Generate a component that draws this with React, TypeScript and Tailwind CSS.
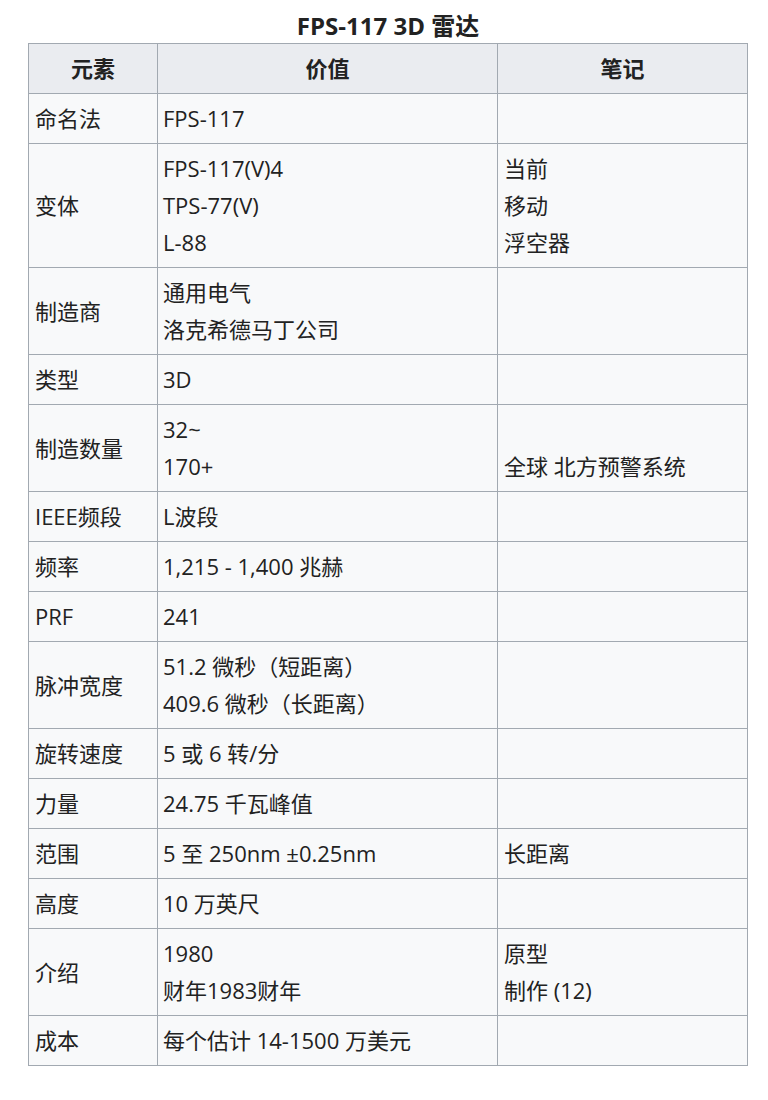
type Row = {
  label: string;
  values: string[];
  notes: string[];
};

const rows: Row[] = [
  { label: "命名法", values: ["FPS-117"], notes: [] },
  { label: "变体", values: ["FPS-117(V)4", "TPS-77(V)", "L-88"], notes: ["当前", "移动", "浮空器"] },
  { label: "制造商", values: ["通用电气", "洛克希德马丁公司"], notes: [] },
  { label: "类型", values: ["3D"], notes: [] },
  { label: "制造数量", values: ["32~", "170+"], notes: ["", "全球 北方预警系统"] },
  { label: "IEEE频段", values: ["L波段"], notes: [] },
  { label: "频率", values: ["1,215 - 1,400 兆赫"], notes: [] },
  { label: "PRF", values: ["241"], notes: [] },
  { label: "脉冲宽度", values: ["51.2 微秒（短距离）", "409.6 微秒（长距离）"], notes: [] },
  { label: "旋转速度", values: ["5 或 6 转/分"], notes: [] },
  { label: "力量", values: ["24.75 千瓦峰值"], notes: [] },
  { label: "范围", values: ["5 至 250nm ±0.25nm"], notes: ["长距离"] },
  { label: "高度", values: ["10 万英尺"], notes: [] },
  { label: "介绍", values: ["1980", "财年1983财年"], notes: ["原型", "制作 (12)"] },
  { label: "成本", values: ["每个估计 14-1500 万美元"], notes: [] },
];

function Lines({ items }: { items: string[] }) {
  return (
    <>
      {items.map((t, i) => (
        <div key={i} className="h-[37px]">
          {t}
        </div>
      ))}
    </>
  );
}

export default function App() {
  return (
    <div
      className="min-h-[1100px] w-[768px] bg-white text-[#222]"
      style={{ fontFamily: '"Open Sans", "Noto Sans CJK SC", sans-serif' }}
    >
      <div className="pl-[28px] pt-[10px]">
        <table className="w-[720px] border-collapse text-[22px] leading-[37px]">
          <caption className="pb-[1px] text-[24px] font-bold leading-[32px]">FPS-117 3D 雷达</caption>
          <thead>
            <tr className="bg-[#eaecf0]">
              <th className="w-[129px] border border-[#a2a9b1] py-[6px] text-center font-bold">元素</th>
              <th className="w-[340px] border border-[#a2a9b1] py-[6px] text-center font-bold">价值</th>
              <th className="border border-[#a2a9b1] py-[6px] text-center font-bold">笔记</th>
            </tr>
          </thead>
          <tbody className="bg-[#f8f9fa]">
            {rows.map((r) => (
              <tr key={r.label}>
                <td className="border border-[#a2a9b1] py-[6px] pl-[6px] align-middle">{r.label}</td>
                <td className="border border-[#a2a9b1] py-[6px] pl-[5px] align-top">
                  <Lines items={r.values} />
                </td>
                <td className="border border-[#a2a9b1] py-[6px] pl-[6px] align-top">
                  <Lines items={r.notes} />
                </td>
              </tr>
            ))}
          </tbody>
        </table>
      </div>
    </div>
  );
}
